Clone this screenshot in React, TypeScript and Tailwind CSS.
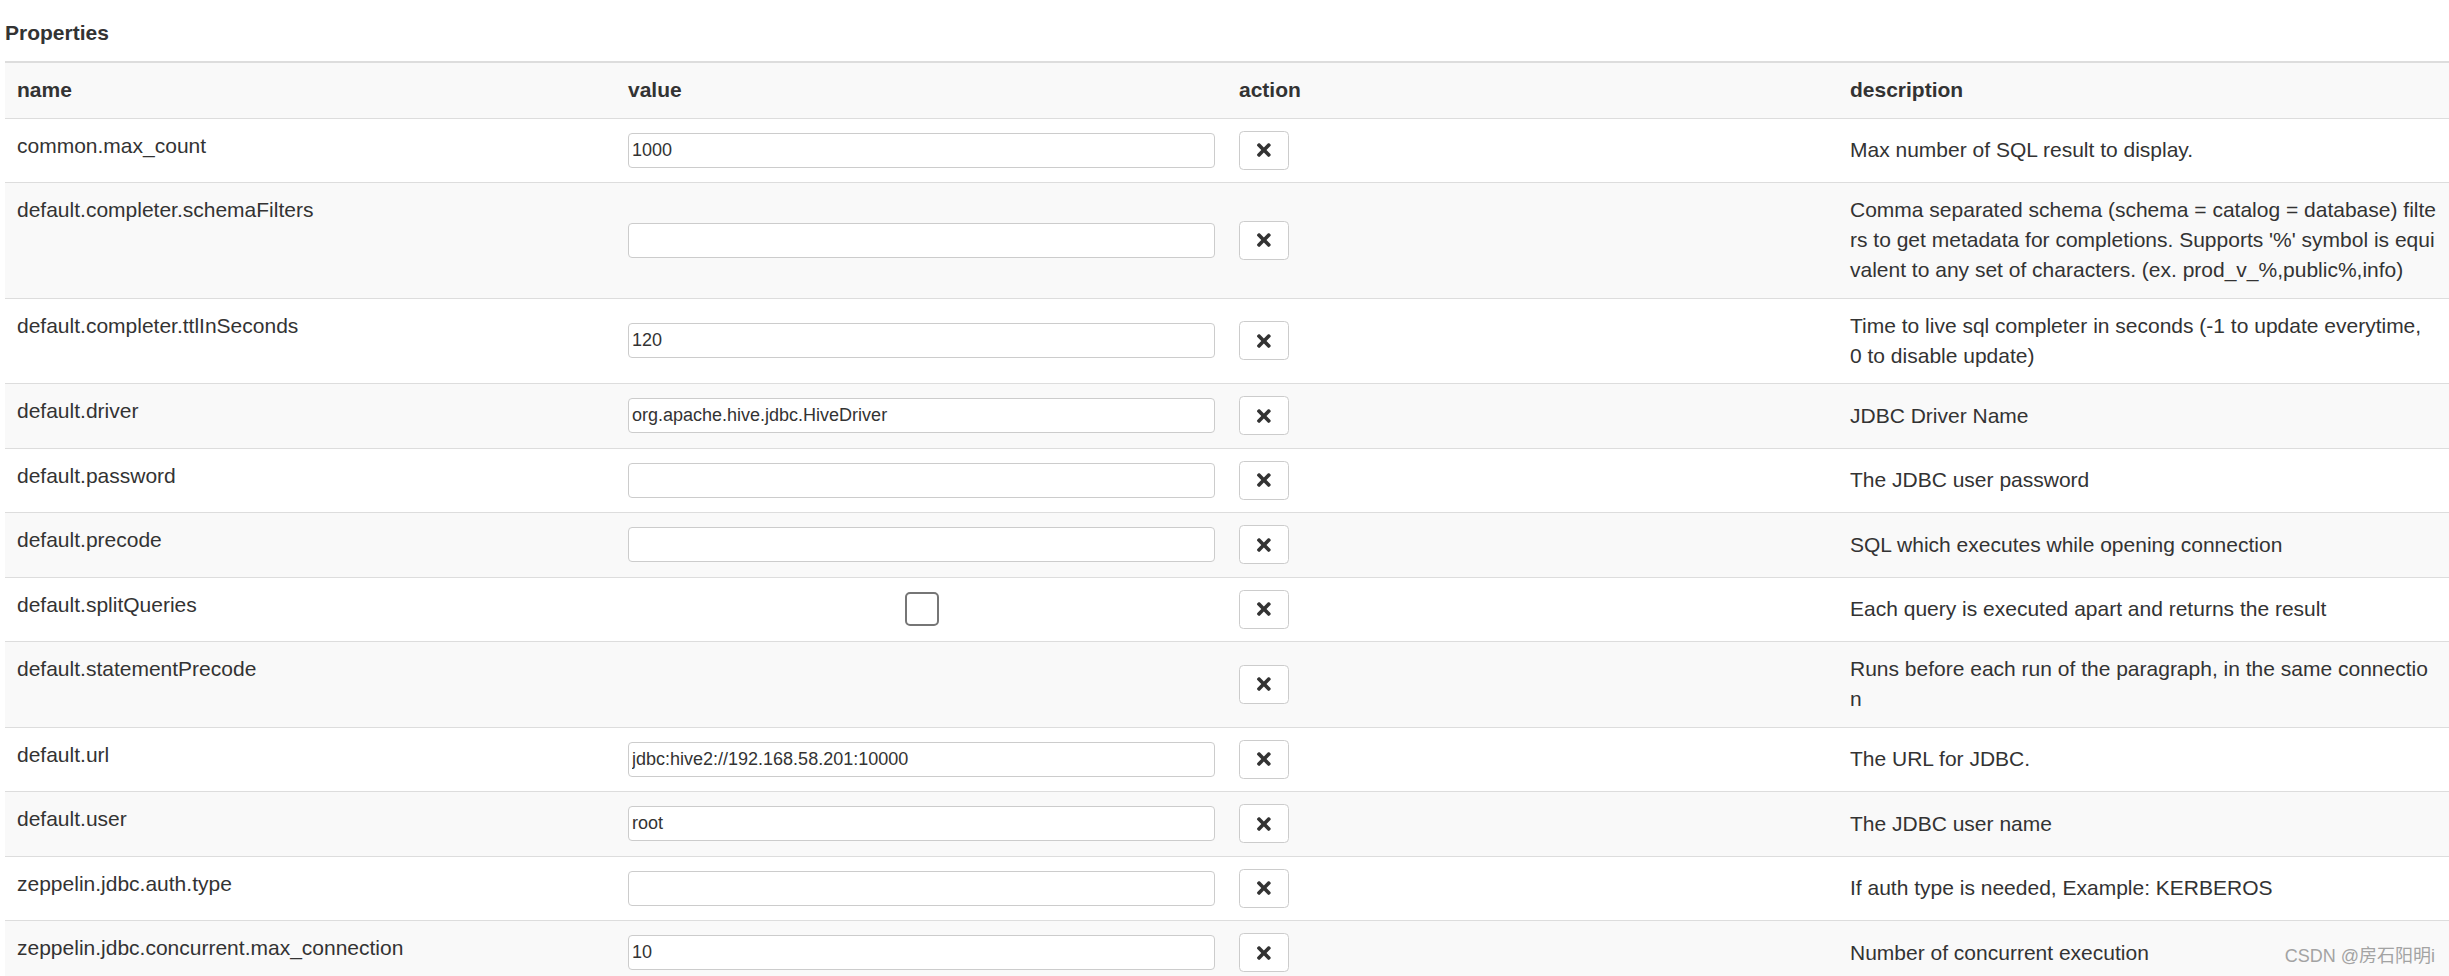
import React from "react";

type Row = {
  name: string;
  kind: "input" | "checkbox" | "none";
  value?: string;
  description: string;
};

const rows: Row[] = [
  { name: "common.max_count", kind: "input", value: "1000", description: "Max number of SQL result to display." },
  {
    name: "default.completer.schemaFilters",
    kind: "input",
    value: "",
    description:
      "Comma separated schema (schema = catalog = database) filters to get metadata for completions. Supports '%' symbol is equivalent to any set of characters. (ex. prod_v_%,public%,info)",
  },
  {
    name: "default.completer.ttlInSeconds",
    kind: "input",
    value: "120",
    description: "Time to live sql completer in seconds (-1 to update everytime, 0 to disable update)",
  },
  { name: "default.driver", kind: "input", value: "org.apache.hive.jdbc.HiveDriver", description: "JDBC Driver Name" },
  { name: "default.password", kind: "input", value: "", description: "The JDBC user password" },
  { name: "default.precode", kind: "input", value: "", description: "SQL which executes while opening connection" },
  { name: "default.splitQueries", kind: "checkbox", description: "Each query is executed apart and returns the result" },
  {
    name: "default.statementPrecode",
    kind: "none",
    description: "Runs before each run of the paragraph, in the same connection",
  },
  { name: "default.url", kind: "input", value: "jdbc:hive2://192.168.58.201:10000", description: "The URL for JDBC." },
  { name: "default.user", kind: "input", value: "root", description: "The JDBC user name" },
  { name: "zeppelin.jdbc.auth.type", kind: "input", value: "", description: "If auth type is needed, Example: KERBEROS" },
  { name: "zeppelin.jdbc.concurrent.max_connection", kind: "input", value: "10", description: "Number of concurrent execution" },
];

function TimesIcon() {
  return (
    <svg width="13.75" height="20" viewBox="0 0 352 512" fill="#333" aria-hidden="true">
      <path d="M242.72 256l100.07-100.07c12.28-12.28 12.28-32.19 0-44.48l-22.24-22.24c-12.28-12.28-32.19-12.28-44.48 0L176 189.28 75.93 89.21c-12.28-12.28-32.19-12.28-44.48 0L9.21 111.45c-12.28 12.28-12.28 32.19 0 44.48L109.28 256 9.21 356.07c-12.28 12.28-12.28 32.19 0 44.48l22.24 22.24c12.28 12.28 32.2 12.28 44.48 0L176 322.72l100.07 100.07c12.28 12.28 32.2 12.28 44.48 0l22.24-22.24c12.28-12.28 12.28-32.19 0-44.48L242.72 256z" />
    </svg>
  );
}

function ValueCell({ row }: { row: Row }) {
  if (row.kind === "checkbox") {
    return (
      <div className="flex justify-center">
        <span className="block w-[34px] h-[34px] rounded-[5px] border-2 border-[#767676] bg-white" />
      </div>
    );
  }
  if (row.kind === "none") return null;
  return (
    <input
      type="text"
      defaultValue={row.value}
      className="block w-full h-[35px] rounded-[4px] border border-[#ccc] bg-white pl-[3px] text-[18px] text-[#333] outline-none"
    />
  );
}

export default function App() {
  return (
    <div className="relative h-[976px] overflow-hidden bg-white text-[#333] font-['Liberation_Sans',Arial,sans-serif]">
      <h4 className="pt-[18px] pl-[5px] pb-[13px] text-[21px] leading-[30px] font-bold">Properties</h4>
      <div className="pl-[5px]">
        <table className="w-full table-fixed text-[21px] leading-[30px]">
          <thead>
            <tr className="bg-[#f9f9f9] border-t-2 border-[#ddd]">
              <th className="px-3 pt-3 pb-[12.5px] text-left font-bold">name</th>
              <th className="px-3 pt-3 pb-[12.5px] text-left font-bold">value</th>
              <th className="px-3 pt-3 pb-[12.5px] text-left font-bold">action</th>
              <th className="px-3 pt-3 pb-[12.5px] text-left font-bold">description</th>
            </tr>
          </thead>
          <tbody>
            {rows.map((row, i) => (
              <tr
                key={row.name}
                className={`border-t border-[#ddd] ${i % 2 === 1 ? "bg-[#f9f9f9]" : "bg-white"}`}
              >
                <td className="px-3 pt-3 pb-[12.5px] align-top">{row.name}</td>
                <td className="px-3 pt-3 pb-[12.5px] align-middle">
                  <ValueCell row={row} />
                </td>
                <td className="px-3 pt-3 pb-[12.5px] align-middle">
                  <button className="flex items-center justify-center w-[50px] h-[39px] rounded-[4.5px] border border-[#ccc] bg-white">
                    <TimesIcon />
                  </button>
                </td>
                <td className="px-3 pt-3 pb-[12.5px] align-middle break-all">{row.description}</td>
              </tr>
            ))}
          </tbody>
        </table>
      </div>
      <div className="absolute right-[14px] top-[944px] text-[18px] leading-[24px] text-[#a3a3a3] font-['Liberation_Sans','Noto_Sans_CJK_SC',sans-serif]">
        CSDN @房石阳明i
      </div>
    </div>
  );
}
